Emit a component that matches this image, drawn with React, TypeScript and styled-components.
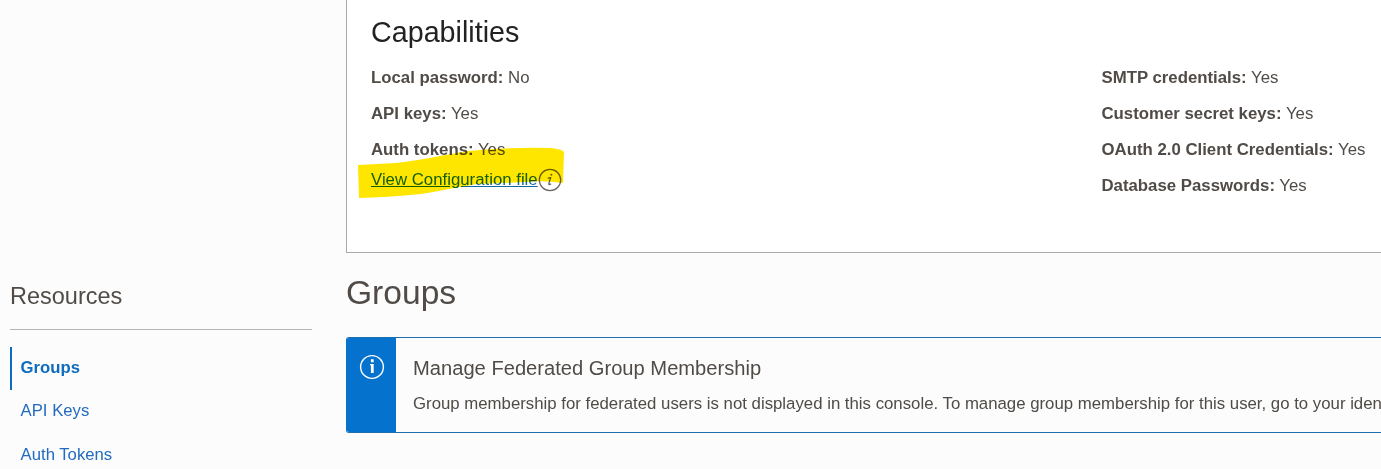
import React from 'react';
import styled, { createGlobalStyle } from 'styled-components';

const Global = createGlobalStyle`
  * { box-sizing: border-box; }
  html, body { margin: 0; background: #fcfcfc; }
  body { font-family: "Liberation Sans", Arial, sans-serif; font-size: 16.8px; color: #504b47; overflow: hidden; }
  h1, h2, h3, p { margin: 0; padding: 0; font-weight: 400; }
`;
const Page = styled.div`display: grid; grid-template-columns: 346px 1fr; width: 1381px; height: 469px; overflow: hidden;`;
const Sidebar = styled.aside`padding: 280px 34px 0 10px;`;
const SideTitle = styled.h3`font-size: 23.5px; line-height: 32px; height: 50px; border-bottom: 1px solid #b5b5b5;`;
const Nav = styled.nav`display: flex; flex-direction: column; margin-top: 17px; font-size: 16.7px;`;
const NavItem = styled.a<{ $active?: boolean }>`
  height: 43.4px; line-height: 41px; padding-left: 8.6px; color: ${p => p.$active ? '#0d6cbd' : '#226bc0'}; white-space: nowrap;
  border-left: 2px solid ${p => p.$active ? '#0d6cbd' : 'transparent'};
  font-weight: ${p => p.$active ? 700 : 400};
`;
const Main = styled.main`min-width: 0; overflow: hidden;`;
const Card = styled.section`
  height: 253px; background: #fff; border: solid #aaa; border-width: 0 0 1px 1px; padding: 12px 0 0 24px;
`;
const CardTitle = styled.h2`font-size: 28.7px; line-height: 40px; color: #222;`;
const Columns = styled.div`display: grid; grid-template-columns: 730.5px 1fr; margin-top: 8px;`;
const Row = styled.p`height: 36px; line-height: 36px; white-space: nowrap;`;
const LinkRow = styled.div`position: relative; display: flex; align-items: center; height: 24px; width: 200px;`;
const Marker = styled.svg`position: absolute; left: -13px; top: -21px; mix-blend-mode: multiply;`;
const Link = styled.a`color: #14689f; text-decoration: underline; white-space: nowrap;`;
const InfoIcon = styled.svg`flex: none;`;
const GroupTitle = styled.h1`font-size: 33.6px; line-height: 42px; margin-top: 19px;`;
const Banner = styled.section`
  display: flex; width: 1060px; height: 96px; margin-top: 23px; border: 1px solid #1f6fae; border-left-color: #0572ce; border-radius: 3px; overflow: hidden;
`;
const BannerIcon = styled.div`flex: 0 0 49px; padding: 16px 0 0 12px; background: #0572ce;`;
const BannerText = styled.div`padding: 17px 0 0 17px; white-space: nowrap;`;
const BannerTitle = styled.h3`font-size: 20.15px; line-height: 26px;`;
const BannerCopy = styled.p`line-height: 24px; margin-top: 11px;`;

const Field = ({ label, value }: { label: string; value: string }) => <Row><b>{label}:</b> {value}</Row>;

export default function App() {
  return <><Global /><Page>
    <Sidebar>
      <SideTitle>Resources</SideTitle>
      <Nav><NavItem $active>Groups</NavItem><NavItem>API Keys</NavItem><NavItem>Auth Tokens</NavItem></Nav>
    </Sidebar>
    <Main>
      <Card>
        <CardTitle>Capabilities</CardTitle>
        <Columns>
          <div>
            <Field label="Local password" value="No" />
            <Field label="API keys" value="Yes" />
            <Field label="Auth tokens" value="Yes" />
            <LinkRow>
              <Link>View Configuration file</Link>
              <InfoIcon width="24" height="24" viewBox="0 0 24 24" fill="none" stroke="#6b6660">
                <circle cx="12" cy="12" r="10.7" strokeWidth="1.3" />
                <path d="M9.8 10.6q1.3-1 2.8-1l-1.8 6.3q-.2 1.6 2.3-.2" strokeWidth="1.3" />
                <circle cx="13.4" cy="6.8" r="1" fill="#6b6660" stroke="none" />
              </InfoIcon>
              <Marker width="210" height="60" fill="#ffe600"><path d="M0 18L38 16Q62 13 82 9L110 4Q145 0 193 1Q204 2 206 5L205 36Q185 33 167 35L119 37Q96 41 75 45Q55 49 1 51Z" /></Marker>
            </LinkRow>
          </div>
          <div>
            <Field label="SMTP credentials" value="Yes" />
            <Field label="Customer secret keys" value="Yes" />
            <Field label="OAuth 2.0 Client Credentials" value="Yes" />
            <Field label="Database Passwords" value="Yes" />
          </div>
        </Columns>
      </Card>
      <GroupTitle>Groups</GroupTitle>
      <Banner>
        <BannerIcon>
          <svg width="26" height="26" viewBox="0 0 26 26" fill="none" stroke="#fff">
            <circle cx="13" cy="13" r="11.4" strokeWidth="1.4" />
            <path d="M11 10.6h1.5" strokeWidth="1.2" />
            <path d="M13.3 10V19M13.3 5.2v3" strokeWidth="2.8" />
          </svg>
        </BannerIcon>
        <BannerText>
          <BannerTitle>Manage Federated Group Membership</BannerTitle>
          <BannerCopy>Group membership for federated users is not displayed in this console. To manage group membership for this user, go to your iden</BannerCopy>
        </BannerText>
      </Banner>
    </Main>
  </Page></>;
}
